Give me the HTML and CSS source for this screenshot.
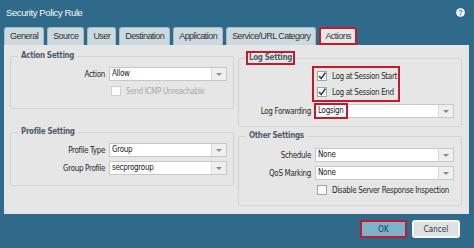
FILE: index.html
```html
<!DOCTYPE html>
<html lang="en">
<head>
    <meta charset="UTF-8">
    <meta name="viewport" content="width=device-width, initial-scale=1.0">
    <title>Security Policy Rule</title>
    <link rel="stylesheet" href="styles.css">
</head>
<body>

<!-- Dialog title -->
<div class="titlebar">
    <span class="title">Security Policy Rule</span>
    <svg class="help" width="9" height="9" viewBox="0 0 9 9">
        <circle cx="4.5" cy="4.5" r="4" fill="#eef3f6" stroke="#ffffff" stroke-width="0.8"/>
        <path d="M3.2 3.5 Q3.2 2.2 4.5 2.2 Q5.8 2.2 5.8 3.4 Q5.8 4.1 4.9 4.5 Q4.5 4.7 4.5 5.3" fill="none" stroke="#2f6a8a" stroke-width="1"/>
        <circle cx="4.5" cy="6.7" r="0.6" fill="#2f6a8a"/>
    </svg>
</div>

<!-- Tabs -->
<div class="tabs">
    <div class="tab">General</div>
    <div class="tab">Source</div>
    <div class="tab">User</div>
    <div class="tab">Destination</div>
    <div class="tab">Application</div>
    <div class="tab">Service/URL Category</div>
    <div class="tab active">Actions</div>
</div>

<div class="panel">
    <div class="col col-left">
        <fieldset class="group group-action">
            <legend>Action Setting</legend>
            <div class="fields">
                <label class="field-label">Action</label>
                <div class="select"><span class="value">Allow</span><span class="arrow"></span></div>
                <span></span>
                <label class="check disabled"><span class="box"></span>Send ICMP Unreachable</label>
            </div>
        </fieldset>

        <fieldset class="group group-profile">
            <legend>Profile Setting</legend>
            <div class="fields">
                <label class="field-label">Profile Type</label>
                <div class="select"><span class="value">Group</span><span class="arrow"></span></div>
                <label class="field-label">Group Profile</label>
                <div class="select"><span class="value">secprogroup</span><span class="arrow"></span></div>
            </div>
        </fieldset>
    </div>

    <div class="col col-right">
        <fieldset class="group group-log">
            <legend class="marked">Log Setting</legend>
            <div class="fields">
                <span></span>
                <div class="check-list marked">
                    <label class="check"><span class="box checked"><svg width="8" height="8" viewBox="0 0 8 8"><path d="M1 4 L3.2 6.4 L7.4 0.6" fill="none" stroke="#1d4d6c" stroke-width="1.6"/></svg></span>Log at Session Start</label>
                    <label class="check"><span class="box checked"><svg width="8" height="8" viewBox="0 0 8 8"><path d="M1 4 L3.2 6.4 L7.4 0.6" fill="none" stroke="#1d4d6c" stroke-width="1.6"/></svg></span>Log at Session End</label>
                </div>
                <label class="field-label">Log Forwarding</label>
                <div class="select"><span class="value"><span class="marked-text">Logsign</span></span><span class="arrow"></span></div>
            </div>
        </fieldset>

        <fieldset class="group group-other">
            <legend>Other Settings</legend>
            <div class="fields">
                <label class="field-label">Schedule</label>
                <div class="select"><span class="value">None</span><span class="arrow"></span></div>
                <label class="field-label">QoS Marking</label>
                <div class="select"><span class="value">None</span><span class="arrow"></span></div>
                <span></span>
                <label class="check"><span class="box"></span>Disable Server Response Inspection</label>
            </div>
        </fieldset>
    </div>
</div>

<!-- Dialog buttons -->
<div class="buttons">
    <button class="btn btn-ok">OK</button>
    <button class="btn btn-cancel">Cancel</button>
</div>

</body>
</html>
```

FILE: styles.css
```css
/* Dialog frame */
body {
    margin: 0;
    width: 474px;
    height: 248px;
    background-color: #306a8a;
    font-family: "DejaVu Sans Condensed", "DejaVu Sans", sans-serif;
    font-size: 8px;
    color: #2a2a2a;
    overflow: hidden;
}
.titlebar {
    height: 27px;
    display: flex;
    align-items: center;
    justify-content: space-between;
    padding: 0 9px 3px 6px;
    box-sizing: border-box;
}
.title {
    font-family: "Liberation Sans", Arial, sans-serif;
    font-size: 9.5px;
    letter-spacing: -0.4px;
    color: #f2f6f8;
}
.help {
    display: block;
}

/* Tabs */
.tabs {
    display: flex;
    gap: 3px;
    margin-left: 4px;
    height: 18px;
}
.tab {
    font-family: "Liberation Sans", Arial, sans-serif;
    font-size: 9px;
    letter-spacing: -0.55px;
    color: #333;
    background-color: #ccd9df;
    border: 1px solid #a7bcc7;
    border-bottom: none;
    border-radius: 3px 3px 0 0;
    padding: 0 5px;
    line-height: 17px;
}
.tab.active {
    background-color: #e8e8e8;
    border: 2px solid #c41a2e;
    line-height: 14px;
    padding: 0 4px;
}

/* Content */
.panel {
    margin: 0 5px 0 4px;
    height: 169px;
    box-sizing: border-box;
    background-color: #e6e6e6;
    padding: 6px 7px 0 6px;
    display: flex;
    gap: 4px;
}
.col {
    flex: 1;
    display: flex;
    flex-direction: column;
    min-width: 0;
}
.group {
    margin: 0;
    padding: 6px 6px 10px 0;
    border: 1px solid #d3d3d3;
    border-radius: 2px;
    min-width: 0;
}
.group legend {
    margin-left: 7px;
    padding: 0 3px;
    line-height: 10px;
    font-weight: bold;
    color: #4f5e6c;
    letter-spacing: -0.35px;
}
.group legend.marked {
    border: 2px solid #c41a2e;
    padding: 0 1px;
}
.group-action {
    padding-bottom: 11px;
    margin-bottom: 18px;
}
.group-log {
    padding-top: 1px;
    padding-bottom: 8px;
    padding-right: 7px;
    margin-bottom: 4px;
}
.group-other {
    padding-top: 7px;
    padding-right: 7px;
    padding-bottom: 9px;
}
.fields {
    display: grid;
    grid-template-columns: 94px 1fr;
    column-gap: 4px;
    row-gap: 4px;
    align-items: center;
}
.col-right .fields {
    grid-template-columns: 72px 1fr;
}
.group-log .fields {
    row-gap: 2px;
}
.field-label {
    text-align: right;
    letter-spacing: -0.35px;
    white-space: nowrap;
}

/* Select boxes */
.select {
    height: 14px;
    box-sizing: border-box;
    border: 1px solid #c8c8c8;
    background-color: #fff;
    display: flex;
}
.select .value {
    flex: 1;
    padding-left: 2px;
    line-height: 12px;
    letter-spacing: -0.3px;
    color: #222;
}
.select .marked-text {
    display: inline-block;
    margin-left: -2px;
    padding: 0 2px 0 2px;
    outline: 2px solid #c41a2e;
}
.select .arrow {
    width: 14px;
    background-color: #efefef;
    border-left: 1px solid #dadada;
    display: flex;
    align-items: center;
    justify-content: center;
}
.select .arrow::after {
    content: "";
    border-left: 3.5px solid transparent;
    border-right: 3.5px solid transparent;
    border-top: 3.5px solid #8b8b8b;
}

/* Checkboxes */
.check {
    display: flex;
    align-items: center;
    gap: 5px;
    height: 12px;
    margin-left: 2px;
    letter-spacing: -0.35px;
    white-space: nowrap;
}
.check .box {
    width: 8px;
    height: 8px;
    border: 1px solid #a4a4a4;
    background-color: #fbfbfb;
    display: flex;
    align-items: center;
    justify-content: center;
}
.check .box svg {
    display: block;
}
.check.disabled {
    color: #a9a9a9;
}
.check.disabled .box {
    border-color: #cfcfcf;
}
.check-list {
    justify-self: start;
    margin-left: -3px;
    padding: 0 1px 0 3px;
    display: flex;
    flex-direction: column;
}
.check-list.marked {
    border: 2px solid #c41a2e;
}
.check-list .check {
    height: 16px;
    margin-left: 0;
}

/* Buttons */
.buttons {
    display: flex;
    justify-content: flex-end;
    gap: 5px;
    padding: 6px 14px 0 0;
}
.btn {
    height: 18px;
    font-family: "DejaVu Sans Condensed", "DejaVu Sans", sans-serif;
    font-size: 8px;
    padding: 0;
    cursor: pointer;
}
.btn-ok {
    width: 47px;
    background-color: #7eb1ca;
    border: 2px solid #c41a2e;
    color: #1c3746;
}
.btn-cancel {
    width: 48px;
    background-color: #dde1e4;
    border: 2px solid #f4f6f7;
    border-radius: 3px;
    color: #333;
}
```
